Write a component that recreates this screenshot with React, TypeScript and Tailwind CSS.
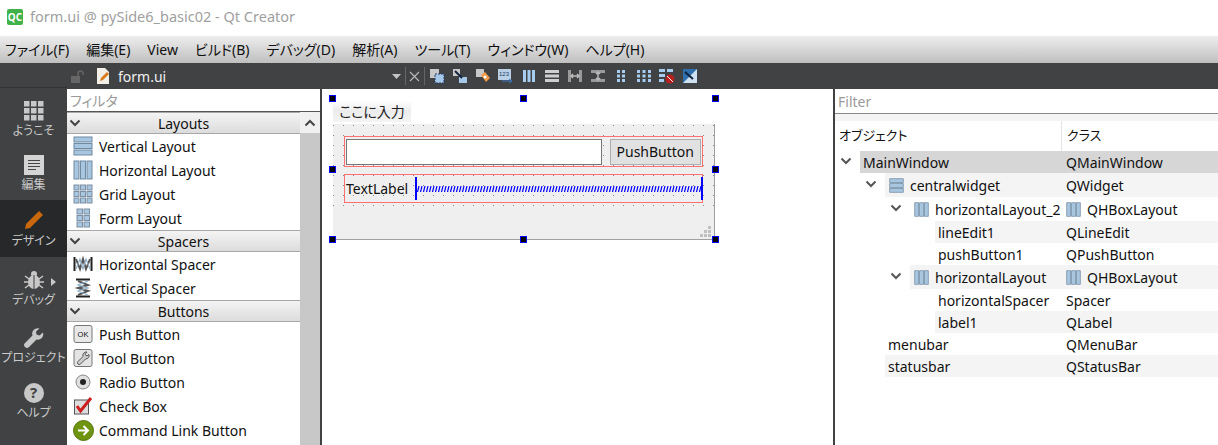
import React from "react";

const Chev = ({ c = "#444" }: { c?: string }) => (
  <svg width="12" height="8" viewBox="0 0 12 8"><path d="M1.5 1.5 6 6l4.5-4.5" fill="none" stroke={c} strokeWidth="2" /></svg>
);

const VBox = ({ s = 20 }: { s?: number }) => (
  <svg width={s} height={s} viewBox="0 0 20 20">
    {[1, 7.5, 14].map((y) => (
      <rect key={y} x="1" y={y} width="18" height="5" fill="#a9c6e0" stroke="#6f8aa3" />
    ))}
  </svg>
);
const HBox = ({ s = 20 }: { s?: number }) => (
  <svg width={s} height={s} viewBox="0 0 20 20">
    {[1, 7.5, 14].map((x) => (
      <rect key={x} x={x} y="1" width="5" height="18" fill="#a9c6e0" stroke="#6f8aa3" />
    ))}
  </svg>
);
const GridI = () => (
  <svg width="20" height="20" viewBox="0 0 20 20">
    {[1, 7.5, 14].flatMap((x) =>
      [1, 7.5, 14].map((y) => <rect key={x + "-" + y} x={x} y={y} width="5" height="5" fill="#a9c6e0" stroke="#7c8fa3" />)
    )}
  </svg>
);
const FormI = () => (
  <svg width="20" height="20" viewBox="0 0 20 20">
    {[4, 11].flatMap((x) =>
      [1, 7.5, 14].map((y) => <rect key={x + "-" + y} x={x} y={y} width="5.5" height="5" fill="#a9c6e0" stroke="#7c8fa3" />)
    )}
  </svg>
);
const HSpacer = () => (
  <svg width="20" height="20" viewBox="0 0 20 20">
    <rect x="0.5" y="3" width="2" height="14" fill="#222" />
    <rect x="17.5" y="3" width="2" height="14" fill="#222" />
    <path d="M3 5l4 10 3-10 3 10 4-10" fill="none" stroke="#555" strokeWidth="2" />
    <path d="M3 15l4-10 3 10 3-10 4 10" fill="none" stroke="#8fb0c8" strokeWidth="1.2" />
  </svg>
);
const VSpacer = () => (
  <svg width="20" height="20" viewBox="0 0 20 20">
    <rect x="3" y="0.5" width="14" height="2" fill="#222" />
    <rect x="3" y="17.5" width="14" height="2" fill="#222" />
    <path d="M5 3l10 4-10 3 10 3-10 4" fill="none" stroke="#555" strokeWidth="2" />
    <path d="M15 3L5 7l10 3-10 3 10 4" fill="none" stroke="#8fb0c8" strokeWidth="1.2" />
  </svg>
);
const PushI = () => (
  <svg width="20" height="20" viewBox="0 0 20 20">
    <rect x="1" y="1.5" width="18" height="17" rx="2" fill="#e8e8e8" stroke="#777" />
    <text x="10" y="13" textAnchor="middle" fontSize="7.5" fontFamily="Liberation Sans" fill="#111">OK</text>
  </svg>
);
const ToolI = () => (
  <svg width="20" height="20" viewBox="0 0 20 20">
    <rect x="1" y="1.5" width="18" height="17" rx="2" fill="#e4e4e4" stroke="#777" />
    <path d="M14 4a3.5 3.5 0 0 0-4 4.5L5 13.5a1.6 1.6 0 0 0 2.5 2.5l5-5A3.5 3.5 0 0 0 16 6.5l-2 1.5-2-1.5z" fill="#cfcfcf" stroke="#555" />
  </svg>
);
const RadioI = () => (
  <svg width="20" height="20" viewBox="0 0 20 20">
    <circle cx="10" cy="10" r="7" fill="#e0e0e0" stroke="#888" />
    <circle cx="10" cy="10" r="3" fill="#222" />
  </svg>
);
const CheckI = () => (
  <svg width="20" height="20" viewBox="0 0 20 20">
    <rect x="1.5" y="4" width="14" height="14" fill="#ddd" stroke="#555" />
    <path d="M4 10l3.5 5L18 2" fill="none" stroke="#cc1f1f" strokeWidth="3" />
  </svg>
);
const CmdI = () => (
  <svg width="21" height="21" viewBox="0 0 21 21">
    <circle cx="10.5" cy="10.5" r="10" fill="#6f9410" stroke="#55730c" />
    <path d="M5 10.5h9M10.5 6l4.5 4.5-4.5 4.5" fill="none" stroke="#fff" strokeWidth="2" />
  </svg>
);

const Item = ({ icon, label }: { icon: React.ReactNode; label: string }) => (
  <div className="flex h-6 items-center">
    <div className="flex w-[32px] justify-center">{icon}</div>
    <span className="text-[14px] text-[#111]">{label}</span>
  </div>
);
const Cat = ({ label }: { label: string }) => (
  <div className="relative flex h-[22px] items-center justify-center border-y border-[#a8a8a8] bg-gradient-to-b from-[#f4f4f4] to-[#dcdcdc] text-[14px] text-[#111]">
    <span className="absolute left-[2px] top-[6px]"><Chev /></span>
    {label}
  </div>
);

const SideItem = ({ icon, label, active, h, children }: { icon: React.ReactNode; label: string; active?: boolean; h: string; children?: React.ReactNode }) => (
  <div className={"relative flex flex-col items-center justify-center gap-[2px] " + h + (active ? " bg-[#262829]" : "")}>
    {icon}
    <span className="whitespace-nowrap text-[12px] leading-[16px] text-[#c9c9c9]">{label}</span>
    {children}
  </div>
);

const Handle = ({ cls }: { cls: string }) => <div className={"absolute h-[7px] w-[7px] border border-[#0000ff] bg-black " + cls} />;

const T = ({ children }: { children: React.ReactNode }) => (
  <div className="flex h-[23px] w-[23px] items-center justify-center">
    <svg width="16" height="16" viewBox="0 0 16 16">{children}</svg>
  </div>
);

type Row = {
  h: string; pad: string; chev?: boolean; bg: string; nameW: string; icon?: "v" | "h"; name: string; cls: string; clsIcon?: boolean;
};
const rows: Row[] = [
  { h: "h-[22px]", pad: "w-[25px]", chev: true, bg: "bg-[#d6d6d6]", nameW: "w-[202px] pl-[3px]", name: "MainWindow", cls: "QMainWindow" },
  { h: "h-[24px]", pad: "w-[50px]", chev: true, bg: "bg-[#f4f4f4]", nameW: "w-[177px] pl-[4px]", icon: "v", name: "centralwidget", cls: "QWidget" },
  { h: "h-[24px]", pad: "w-[75px]", chev: true, bg: "", nameW: "w-[152px] pl-[4px]", icon: "h", name: "horizontalLayout_2", cls: "QHBoxLayout", clsIcon: true },
  { h: "h-[22px]", pad: "w-[100px]", bg: "bg-[#f4f4f4]", nameW: "w-[127px] pl-[3px]", name: "lineEdit1", cls: "QLineEdit" },
  { h: "h-[22px]", pad: "w-[100px]", bg: "", nameW: "w-[127px] pl-[3px]", name: "pushButton1", cls: "QPushButton" },
  { h: "h-[24px]", pad: "w-[75px]", chev: true, bg: "bg-[#f4f4f4]", nameW: "w-[152px] pl-[4px]", icon: "h", name: "horizontalLayout", cls: "QHBoxLayout", clsIcon: true },
  { h: "h-[22px]", pad: "w-[100px]", bg: "", nameW: "w-[127px] pl-[3px]", name: "horizontalSpacer", cls: "Spacer" },
  { h: "h-[22px]", pad: "w-[100px]", bg: "bg-[#f4f4f4]", nameW: "w-[127px] pl-[3px]", name: "label1", cls: "QLabel" },
  { h: "h-[22px]", pad: "w-[50px]", bg: "", nameW: "w-[177px] pl-[3px]", name: "menubar", cls: "QMenuBar" },
  { h: "h-[22px]", pad: "w-[50px]", bg: "bg-[#f4f4f4]", nameW: "w-[177px] pl-[3px]", name: "statusbar", cls: "QStatusBar" },
];

export default function App() {
  return (
    <div className="flex h-[445px] w-[1218px] flex-col overflow-hidden bg-white font-['Noto_Sans','Noto_Sans_CJK_JP',sans-serif] [font-feature-settings:'palt']">
      {/* title bar */}
      <div className="flex h-[36px] shrink-0 items-center bg-white pl-[7px] pb-[2px]">
        <div className="flex h-[16px] w-[16px] items-center justify-center rounded-[2px] bg-[#41b14a] text-[10px] font-bold leading-none text-white">QC</div>
        <span className="ml-[7px] text-[14.5px] text-[#a0a0a0]">form.ui @ pySide6_basic02 - Qt Creator</span>
      </div>
      {/* menu bar */}
      <div className="flex h-[27px] shrink-0 items-center gap-[17px] bg-gradient-to-b from-[#eeeeee] to-[#bfbfbf] pl-[5px] text-[14px] text-[#111]">
        {["ファイル(F)", "編集(E)", "View", "ビルド(B)", "デバッグ(D)", "解析(A)", "ツール(T)", "ウィンドウ(W)", "ヘルプ(H)"].map((m) => (
          <span key={m}>{m}</span>
        ))}
      </div>
      <div className="flex min-h-0 flex-1">
        {/* sidebar */}
        <div className="flex w-[67px] shrink-0 flex-col bg-[#404244]">
          <div className="h-[25px] shrink-0 border-b border-[#333]" />
          <SideItem h="h-[60px] pt-[3px]" label="ようこそ" icon={
            <svg width="20" height="20" viewBox="0 0 20 20" fill="#c8c8c8">
              {[0, 7, 14].flatMap((x) => [0, 7, 14].map((y) => <rect key={x + "-" + y} x={x} y={y} width="5.5" height="5.5" />))}
            </svg>
          } />
          <SideItem h="h-[52px]" label="編集" icon={
            <svg width="20" height="20" viewBox="0 0 20 20">
              <rect width="20" height="20" fill="#d4d4d4" />
              <path d="M4 5.5h12M4 8.5h12M4 11.5h12M4 14.5h8" stroke="#444" />
            </svg>
          } />
          <SideItem h="h-[57px]" active label="デザイン" icon={
            <svg width="22" height="22" viewBox="0 0 22 22">
              <path d="M16 2l4 4L7 19l-5 1 1-5z" fill="#c8670c" />
            </svg>
          } />
          <SideItem h="h-[61px] pt-[2px]" label="デバッグ" icon={
            <svg width="20" height="20" viewBox="0 0 20 20" fill="#c8c8c8">
              <ellipse cx="10" cy="12" rx="6" ry="7" />
              <circle cx="10" cy="4" r="3" />
              <path d="M1 6l4 3M19 6l-4 3M0 12h4M20 12h-4M1 18l4-3M19 18l-4-3" stroke="#c8c8c8" strokeWidth="1.5" />
              <path d="M10 5v14" stroke="#404244" />
            </svg>
          }>
            <svg className="absolute left-[51px] top-[21px]" width="5" height="8" viewBox="0 0 5 8"><path d="M0 0l5 4-5 4z" fill="#c8c8c8" /></svg>
          </SideItem>
          <SideItem h="h-[57px]" label="プロジェクト" icon={
            <svg width="20" height="20" viewBox="0 0 20 20">
              <path d="M19 4.5l-3.5 3-3-1-.5-3L15.5 0.5a5.5 5.5 0 0 0-7 7L1 15a2.8 2.8 0 0 0 4 4l7.5-7.5a5.5 5.5 0 0 0 6.5-7z" fill="#c8c8c8" />
            </svg>
          } />
          <SideItem h="h-[53px]" label="ヘルプ" icon={
            <div className="flex h-[20px] w-[20px] items-center justify-center rounded-full bg-[#c8c8c8] text-[15px] font-bold leading-none text-[#404244]">?</div>
          } />
        </div>
        <div className="flex min-w-0 flex-1 flex-col">
          {/* toolbar */}
          <div className="flex h-[26px] shrink-0 items-center bg-[#404244] text-white">
            <svg className="ml-[4px]" width="13" height="13" viewBox="0 0 13 13"><rect x="0" y="6" width="9" height="7" fill="#666" /><path d="M7 6V3.5a2.5 2.5 0 0 1 5 0V5" fill="none" stroke="#666" strokeWidth="1.5" /></svg>
            <svg className="ml-[12px]" width="14" height="16" viewBox="0 0 14 16"><path d="M1 0h8l4 4v12H1z" fill="#f2efe6" /><path d="M4 13l1-3 6-6 2 2-6 6z" fill="#d8791a" /></svg>
            <span className="ml-[8px] text-[14px] text-[#f0f0f0]">form.ui</span>
            <svg className="ml-[226px]" width="9" height="5" viewBox="0 0 9 5"><path d="M0 0h9L4.5 5z" fill="#c4c4c4" /></svg>
            <div className="ml-[4px] h-[18px] w-px bg-[#666]" />
            <svg className="ml-[3px]" width="11" height="11" viewBox="0 0 11 11"><path d="M1 1l9 9M10 1l-9 9" stroke="#b8b8b8" strokeWidth="1.2" /></svg>
            <div className="ml-[4px] mr-[0px] h-[18px] w-px bg-[#666]" />
            <div className="ml-[0px] flex">
              <T><rect x="1" y="1" width="9" height="9" fill="#c9c9c9" /><rect x="6" y="6" width="9" height="9" fill="#a8c8ea" stroke="#24406c" strokeDasharray="2 1" /></T>
              <T><rect x="1" y="1" width="7" height="7" fill="#c9c9c9" /><rect x="7" y="9" width="8" height="6" fill="#a8c8ea" /><path d="M3 3l7 7" stroke="#12233f" strokeWidth="2" /></T>
              <T><rect x="1" y="1" width="8" height="8" fill="#c9c9c9" /><path d="M6 7l4-3 5 6-4 4z" fill="#f09a4a" /><circle cx="10" cy="9" r="1.5" fill="#fff" /></T>
              <T><rect x="0" y="1" width="13" height="11" fill="#b9cfe6" /><text x="1" y="8" fontSize="6" fontFamily="Liberation Sans" fill="#24406c">123</text><path d="M4 13h9M11 11l3 2-3 2" stroke="#3b78c4" fill="none" /></T>
              <T><path d="M2 2h3v12H2zM6.5 2h3v12h-3zM11 2h3v12h-3z" fill="#a6cdf0" /></T>
              <T><path d="M1 2h14v3H1zM1 6.5h14v3H1zM1 11h14v3H1z" fill="#cfcfcf" /></T>
              <T><path d="M1 2h3v12H1zM12 2h3v12h-3z" fill="#9a9a9a" /><path d="M4 8h8M6 6l-2 2 2 2M10 6l2 2-2 2" stroke="#bbb" fill="none" strokeWidth="1.5" /></T>
              <T><path d="M1 2h14v3H1zM1 11h14v3H1z" fill="#9a9a9a" /><path d="M8 4v8M6 6l2-2 2 2M6 10l2 2 2-2" stroke="#bbb" fill="none" strokeWidth="1.5" /></T>
              <T>{[4, 9].flatMap((x) => [2, 6.5, 11].map((y) => <rect key={x + "-" + y} x={x} y={y} width="3" height="3" fill="#a6cdf0" />))}</T>
              <T>{[1, 6.5, 12].flatMap((x) => [2, 6.5, 11].map((y) => <rect key={x + "-" + y} x={x} y={y} width="3" height="3" fill="#a6cdf0" />))}</T>
              <T><path d="M0 1h6v3H0zM8 1h6v3H8zM0 6h6v3H0zM0 11h5v3H0z" fill="#a6cdf0" /><circle cx="11" cy="11" r="4.5" fill="#b82020" /><path d="M8 8l6 6" stroke="#eee" /></T>
              <T><rect x="1" y="1" width="14" height="14" fill="#cfe0f0" /><path d="M1 1h14L1 15z" fill="#2f6fae" /><path d="M3 4l8 7" stroke="#0c2038" strokeWidth="2" /></T>
            </div>
          </div>
          <div className="flex min-h-0 flex-1">
            {/* widget box */}
            <div className="flex w-[255px] shrink-0 flex-col border-r-2 border-[#404244] bg-white">
              <div className="flex h-[23px] shrink-0 items-center border-b border-[#555] pl-[3px] text-[14px] text-[#9a9a9a]">フィルタ</div>
              <div className="flex min-h-0 flex-1">
                <div className="min-w-0 flex-1 overflow-hidden">
                  <Cat label="Layouts" />
                  <Item icon={<VBox />} label="Vertical Layout" />
                  <Item icon={<HBox />} label="Horizontal Layout" />
                  <Item icon={<GridI />} label="Grid Layout" />
                  <Item icon={<FormI />} label="Form Layout" />
                  <Cat label="Spacers" />
                  <Item icon={<HSpacer />} label="Horizontal Spacer" />
                  <Item icon={<VSpacer />} label="Vertical Spacer" />
                  <Cat label="Buttons" />
                  <Item icon={<PushI />} label="Push Button" />
                  <Item icon={<ToolI />} label="Tool Button" />
                  <Item icon={<RadioI />} label="Radio Button" />
                  <Item icon={<CheckI />} label="Check Box" />
                  <Item icon={<CmdI />} label="Command Link Button" />
                </div>
                <div className="flex w-[20px] shrink-0 flex-col bg-[#c8c8c8]">
                  <div className="flex h-[21px] items-center justify-center bg-[#f0f0f0]">
                    <svg width="12" height="8" viewBox="0 0 12 8"><path d="M1.5 6.5 6 2l4.5 4.5" fill="none" stroke="#444" strokeWidth="2" /></svg>
                  </div>
                </div>
              </div>
            </div>
            {/* canvas */}
            <div className="min-w-0 w-[511px] shrink-0 bg-white pl-[11px] pt-[11px]">
              <div className="relative w-[382px]">
                <Handle cls="-left-[4px] -top-[5px]" />
                <Handle cls="left-[187px] -top-[5px]" />
                <Handle cls="left-[379px] -top-[5px]" />
                <Handle cls="-left-[4px] top-[66px]" />
                <Handle cls="left-[379px] top-[66px]" />
                <Handle cls="-left-[4px] top-[136px]" />
                <Handle cls="left-[187px] top-[136px]" />
                <Handle cls="left-[379px] top-[136px]" />
                <div className="h-[24px] bg-white">
                  <div className="flex h-[22px] w-[78px] items-center justify-center bg-gradient-to-b from-white via-[#ececec] to-[#f4f4f4] text-[14px] text-[#222]">ここに入力</div>
                </div>
                <div className="h-[116px] border-b border-r border-[#a0a0a0] bg-[#efefef]">
                  <div className="h-[82px] bg-[radial-gradient(circle_at_0.5px_0.5px,#8a8a8a_0.7px,transparent_0.8px)] bg-[length:10px_10px] bg-[position:0px_1px] px-[11px] pt-[12px]">
                    <div className="flex h-[31px] items-center gap-[8px] border border-[#ff7070] pl-[1px] pr-[1px]">
                      <div className="h-[26px] w-[257px] border border-[#777] bg-white" />
                      <div className="flex h-[26px] w-[92px] items-center justify-center border border-[#adadad] bg-[#e1e1e1] text-[14px] text-[#111]">PushButton</div>
                    </div>
                    <div className="mt-[7px] flex h-[29px] items-center border border-[#ff7070] pl-[1px]">
                      <span className="text-[14px] text-[#111]">TextLabel</span>
                      <div className="ml-[7px] flex h-[23px] w-[288px] items-center border-x-2 border-[#0000ff]">
                        <svg width="284" height="6" className="block">
                          <defs>
                            <pattern id="z" width="3" height="6" patternUnits="userSpaceOnUse">
                              <path d="M0.5 6L2 0" stroke="#0000ff" strokeWidth="1.2" />
                            </pattern>
                          </defs>
                          <rect width="284" height="6" fill="url(#z)" />
                        </svg>
                      </div>
                    </div>
                  </div>
                  <div className="flex h-[33px] items-end justify-end pb-[2px] pr-[3px]">
                    <svg width="11" height="11" viewBox="0 0 11 11" fill="#c0c0c0">
                      <rect x="8" y="0" width="3" height="3" /><rect x="4" y="4" width="3" height="3" /><rect x="8" y="4" width="3" height="3" /><rect x="0" y="8" width="3" height="3" /><rect x="4" y="8" width="3" height="3" /><rect x="8" y="8" width="3" height="3" />
                    </svg>
                  </div>
                </div>
              </div>
            </div>
            {/* object inspector */}
            <div className="flex min-w-0 flex-1 flex-col border-l-2 border-[#404244] bg-white">
              <div className="flex h-[25px] shrink-0 items-center border-b border-[#888] pl-[3px] text-[14px] text-[#9a9a9a]">Filter</div>
              <div className="h-[7px] shrink-0 bg-[#f4f4f4]" />
              <div className="flex h-[30px] shrink-0 text-[13px] text-[#111]">
                <div className="flex w-[227px] items-center border-r border-[#e4e4e4] pl-[4px]">オブジェクト</div>
                <div className="flex items-center pl-[5px]">クラス</div>
              </div>
              {rows.map((r) => (
                <div key={r.name} className={"flex text-[14px] text-[#111] " + r.h}>
                  <div className={"relative flex shrink-0 items-center " + r.pad}>
                    {r.chev && <span className="absolute right-[8px] top-1/2 -mt-[5px] flex"><Chev c="#555" /></span>}
                  </div>
                  <div className={"flex flex-1 items-center " + r.bg}>
                    <div className={"flex shrink-0 items-center gap-[6px] whitespace-nowrap " + r.nameW}>
                      {r.icon === "v" && <VBox s={15} />}
                      {r.icon === "h" && <HBox s={15} />}
                      <span>{r.name}</span>
                    </div>
                    <div className="flex items-center gap-[6px] pl-[4px]">
                      {r.clsIcon && <HBox s={15} />}
                      <span>{r.cls}</span>
                    </div>
                  </div>
                </div>
              ))}
            </div>
          </div>
        </div>
      </div>
    </div>
  );
}
